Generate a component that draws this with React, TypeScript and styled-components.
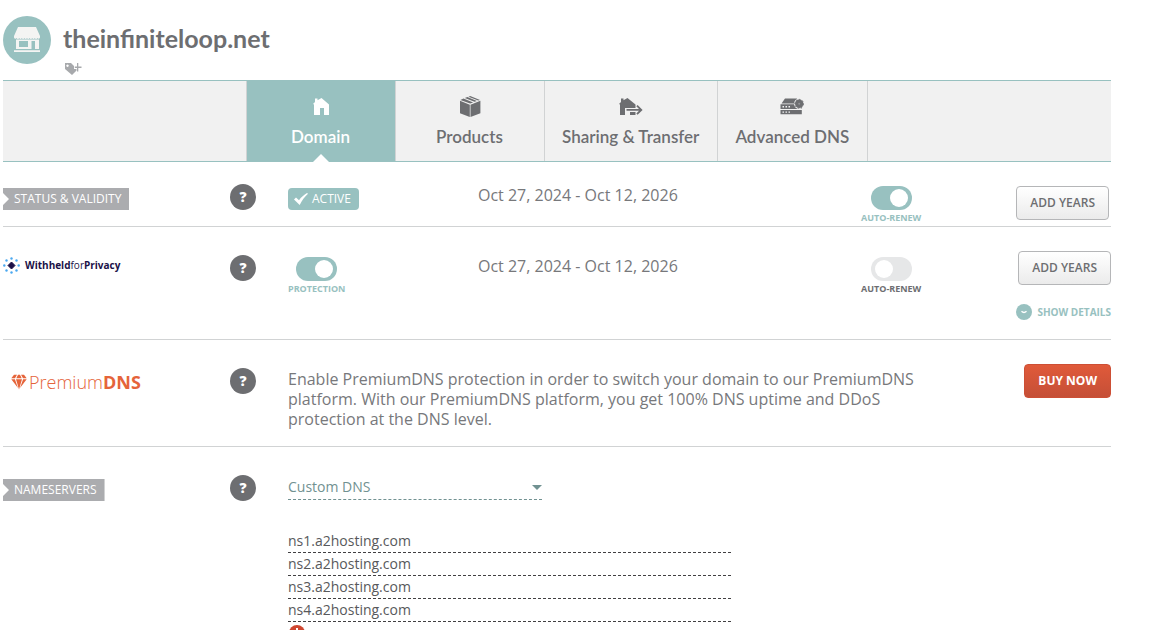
import React, { useId } from "react";
import styled, { createGlobalStyle, css } from "styled-components";

const teal = "#98c1c0";
const gray = "#6d6e71";
const line = "#d1d3d4";

const GlobalStyle = createGlobalStyle`
  *, *::before, *::after { box-sizing: border-box; }
  body {
    margin: 0;
    background: #fff;
    color: ${gray};
    font-family: "Open Sans", "Noto Sans", sans-serif;
    font-size: 16px;
    line-height: 20px;
  }
  button, input, select { font: inherit; color: inherit; }
`;

const Page = styled.main`
  padding: 16px 44px 0 3px;
`;

const Header = styled.header`
  display: flex;
  gap: 12px;
  height: 64px;
`;

const Avatar = styled.div`
  width: 48px;
  height: 48px;
  border-radius: 50%;
  background: ${teal};
  display: flex;
  align-items: center;
  justify-content: center;
`;

const Heading = styled.div`
  display: flex;
  flex-direction: column;
  align-items: flex-start;
  gap: 3px;
`;

const Title = styled.h1`
  margin: 0;
  font-family: Lato, "Open Sans", sans-serif;
  font-size: 25px;
  line-height: 44px;
  font-weight: 700;
`;

const PlainButton = styled.button`
  display: flex;
  align-items: center;
  padding: 0;
  border: 0;
  background: none;
  cursor: pointer;
`;

const TagButton = styled(PlainButton)`
  padding-left: 2px;
`;

const Tabs = styled.nav`
  display: flex;
  height: 82px;
  padding-left: 243px;
  background: #f1f1f1;
  border-top: 1px solid ${teal};
  border-bottom: 1px solid ${teal};
`;

const Tab = styled.a<{ $active?: boolean }>`
  position: relative;
  display: flex;
  flex-direction: column;
  align-items: center;
  gap: 7px;
  min-width: 149px;
  padding: 13px 18px 0 17px;
  border-left: 1px solid ${line};
  color: ${gray};
  font-family: Lato, "Open Sans", sans-serif;
  font-size: 17px;
  line-height: 24px;
  font-weight: 600;
  text-decoration: none;
  white-space: nowrap;
  &:last-child { border-right: 1px solid ${line}; }
  ${(p) =>
    p.$active &&
    css`
      background: ${teal};
      color: #fff;
      &::after {
        content: "";
        position: absolute;
        bottom: -1px;
        left: calc(50% - 8px);
        border: 8px solid transparent;
        border-top: 0;
        border-bottom-color: #fff;
      }
    `}
`;

const Row = styled.section<{ $tight?: boolean; $last?: boolean; $height: number }>`
  display: grid;
  grid-template-columns: 227px 58px 190px 1fr 60px 190px;
  align-items: start;
  min-height: ${(p) => p.$height}px;
  padding-top: ${(p) => (p.$tight ? 18 : 24)}px;
  border-bottom: ${(p) => (p.$last ? "0" : `1px solid ${line}`)};
`;

const Tag = styled.h2`
  justify-self: start;
  margin: 8px 0 0;
  padding: 0 8px 0 11px;
  background: #abacaf;
  clip-path: polygon(0 0, 100% 0, 100% 100%, 0 100%, 0 17px, 6px 11px, 0 5px);
  color: #fff;
  font-size: 12px;
  line-height: 22px;
  font-weight: 400;
`;

const Help = styled.button`
  width: 26px;
  height: 26px;
  margin-top: 4px;
  padding: 0;
  border: 0;
  border-radius: 50%;
  background: ${gray};
  color: #fff;
  font-size: 14px;
  line-height: 26px;
  font-weight: 800;
  cursor: pointer;
`;

const Status = styled.span`
  justify-self: start;
  display: flex;
  align-items: center;
  gap: 4px;
  height: 22px;
  margin-top: 8px;
  padding: 0 8px 0 6px;
  border-radius: 4px;
  background: ${teal};
  color: #fff;
  font-size: 12px;
`;

const Dates = styled.span`
  margin-top: 5px;
  color: #77787b;
`;

const SwitchLabel = styled.label<{ $muted?: boolean }>`
  justify-self: start;
  display: flex;
  flex-direction: column;
  align-items: center;
  gap: 2px;
  margin-top: 6px;
  color: ${(p) => (p.$muted ? gray : teal)};
  font-size: 9px;
  line-height: 12px;
  font-weight: 700;
  white-space: nowrap;
`;

const Switch = styled.input`
  appearance: none;
  display: flex;
  width: 41px;
  height: 24px;
  margin: 0;
  padding: 3px 4px;
  border-radius: 12px;
  background: #e6e7e8;
  &::before {
    content: "";
    width: 18px;
    height: 18px;
    border-radius: 50%;
    background: #fff;
  }
  &:checked {
    justify-content: flex-end;
    background: ${teal};
  }
`;

const Actions = styled.div<{ $inset?: boolean }>`
  display: flex;
  flex-direction: column;
  align-items: flex-end;
  gap: 18px;
  grid-column: 6;
  padding: ${(p) => (p.$inset ? "6px 2px 0 0" : "0")};
`;

const Button = styled.button<{ $primary?: boolean }>`
  height: 34px;
  padding: 0 13px;
  border: 1px solid #b5b6b8;
  border-radius: 4px;
  background: linear-gradient(#fff, #ebebeb);
  color: ${gray};
  font-size: 12px;
  font-weight: 600;
  cursor: pointer;
  ${(p) =>
    p.$primary &&
    css`
      border-color: #cd4f35;
      background: linear-gradient(#e05a3a, #c54f37);
      color: #fff;
      font-weight: 700;
    `}
`;

const DetailsButton = styled(PlainButton)`
  gap: 5px;
  color: ${teal};
  font-size: 10px;
  line-height: 18px;
  font-weight: 700;
`;

const PrivacyLogo = styled.div`
  display: flex;
  align-items: center;
  gap: 5px;
  margin-top: 4px;
  color: #1b1148;
  font-size: 10px;
  font-weight: 500;
  b { font-weight: 700; }
`;

const PremiumLogo = styled.div`
  display: flex;
  align-items: center;
  gap: 2px;
  margin-top: 8px;
  padding-left: 8px;
  color: #e5643a;
  font-size: 18px;
  font-weight: 300;
  b { font-weight: 700; }
`;

const Blurb = styled.p`
  grid-column: 3 / 6;
  max-width: 640px;
  margin: 5px 0 0;
  color: #77787b;
`;

const Servers = styled.div`
  grid-column: 3 / 5;
  display: flex;
  flex-direction: column;
  max-width: 443px;
`;

const SelectBox = styled.div`
  display: grid;
  align-items: center;
  width: 254px;
  margin-bottom: 30px;
  border-bottom: 1px dashed #719191;
  color: #719191;
  > * { grid-area: 1 / 1; }
  > svg { justify-self: end; margin-top: 5px; pointer-events: none; }
`;

const Select = styled.select`
  appearance: none;
  width: 100%;
  height: 28px;
  padding: 4px 0 0;
  border: 0;
  background: none;
  font-size: 14px;
`;

const ServerInput = styled.input`
  height: 23px;
  padding: 0 0 2px;
  border: 0;
  border-bottom: 1px dashed #414042;
  background: none;
  color: #58595b;
  font-size: 14px;
`;

const ErrorNote = styled.p`
  display: flex;
  margin: 2px 0 0;
`;

const StoreIcon = () => (
  <svg width="28" height="26" viewBox="0 0 28 26" fill="#f4f4f3" aria-hidden="true">
    <path d="M5 0h18l4 9v1.500a1.400 1.400 0 0 1-2.600.500 1.400 1.400 0 0 1-2.600 0 1.400 1.400 0 0 1-2.600 0 1.400 1.400 0 0 1-2.600 0 1.400 1.400 0 0 1-2.600 0 1.400 1.400 0 0 1-2.600 0 1.400 1.400 0 0 1-2.600 0 1.400 1.400 0 0 1-2.600 0 1.400 1.400 0 0 1-2.600 0A1.400 1.400 0 0 1 1 10.500V9z" />
    <path fillRule="evenodd" d="M3 12.500h23V22h-4v-8h-3.500v8H3zM6 14v6h9v-6z" />
    <path d="M1 23.200h26V25H1z" />
  </svg>
);

const TagPlusIcon = () => (
  <svg width="17" height="13" viewBox="0 0 17 13" fill="#a7a9ac" aria-hidden="true">
    <path fillRule="evenodd" d="M0 0h6l3 3v3h2.500v1.500L7 12 0 6zM2.500 1.500a1.200 1.200 0 1 0 .01 0z" />
    <path d="M12 0h1.300v3.600H16.500v1.300h-3.200v3.600H12V4.900H9.800V3.600H12z" />
  </svg>
);

const HouseIcon = () => (
  <svg width="24" height="24" viewBox="0 0 24 24" fill="currentColor" aria-hidden="true">
    <path d="M6 4.500h2.500v1.700L12.500 4 20 10.500V21h-5v-7h-4v7H5V10.500l-1-.5 2-2z" />
  </svg>
);

const BoxIcon = () => (
  <svg width="24" height="24" viewBox="0 0 24 24" fill="currentColor" aria-hidden="true">
    <path d="M2 6.800l9.800 3.900V23L2 19.300zM22.400 6.800l-9.900 3.900V23l9.900-3.700z" />
    <path d="M2.400 5.900L5.500 4.600l9.700 3.800-3 1.200zM6.800 4.100l2.600-1L18.900 6.900l-2.400.9zM10.500 2.700L12.200 2l9.800 3.900-1.800.7z" />
  </svg>
);

const TransferIcon = () => (
  <svg width="24" height="24" viewBox="0 0 24 24" fill="currentColor" aria-hidden="true">
    <path d="M2 4.500h2.500v1.700L8.500 4l8 6.500V14H6v7H1V10.500L0 10l2-2z" />
    <path d="M7.500 15H20l-2.700-2.700 1.300-1.300 5 4.900-5 4.900-1.300-1.300L20 16.800H7.500z" />
    <path d="M11 18h5.500v3H11z" />
  </svg>
);

const ServerIcon = () => (
  <svg width="24" height="24" viewBox="0 0 24 24" fill="currentColor" aria-hidden="true">
    <path d="M5 4.500h12L15.500 9.500H1.500z" />
    <path fillRule="evenodd" d="M.5 10.300h21.300V15H.5zm2 1.700v1.400H4V12zm3 0v1.400H7V12zm3 0v1.400H10V12z" />
    <path fillRule="evenodd" d="M.5 16h21.300v4.200H.5zm2 1.400v1.400H4v-1.400zm3 0v1.400H7v-1.400zm3 0v1.400H10v-1.400z" />
    <circle cx="19.200" cy="9.800" r="5.200" fill="#f1f1f1" />
    <circle cx="19.200" cy="9.800" r="4.200" />
    <circle cx="19.200" cy="9.800" r="4.400" fill="none" stroke="currentColor" strokeWidth="1" strokeDasharray="1.600 1.700" />
    <circle cx="19.200" cy="9.800" r="1" fill="#939497" />
  </svg>
);

const CheckIcon = () => (
  <svg width="14" height="12" viewBox="0 0 14 12" fill="#fff" aria-hidden="true">
    <path d="M0 6.500L2 4.500l3 2.800C7 4.200 10 1.800 13 0l1 .8C10.500 4 8 7.500 5.700 12z" />
  </svg>
);

const PrivacyIcon = () => (
  <svg width="17" height="17" viewBox="0 0 17 17" fill="#4aa8f0" aria-hidden="true">
    <path d="M8.500 5l3.500 3.500L8.500 12 5 8.500z" fill="#1b1148" stroke="#1b1148" strokeWidth="1" strokeLinejoin="round" />
    <circle cx="8.500" cy="1.500" r="1.200" />
    <circle cx="8.500" cy="15.500" r="1.200" />
    <circle cx="1.300" cy="8.500" r="1.200" />
    <circle cx="15.700" cy="8.500" r="1.200" />
    <circle cx="3.500" cy="3.500" r="1.200" />
    <circle cx="13.500" cy="3.500" r="1.200" />
    <circle cx="3.500" cy="13.500" r="1.200" />
    <circle cx="13.500" cy="13.500" r="1.200" />
  </svg>
);

const DiamondIcon = () => (
  <svg width="16" height="16" viewBox="0 0 16 16" fill="currentColor" aria-hidden="true">
    <path d="M3 .8h3L4 4.300H.3zM7 .8h2l1.700 3.500H5.300zM10 .8h3l2.700 3.500H12zM.3 5.300h3.600L7 14zM5 5.300h6L8 15.500zM12.100 5.300h3.600L9 14z" />
  </svg>
);

const DetailsIcon = () => (
  <svg width="16" height="16" viewBox="0 0 16 16" aria-hidden="true">
    <circle cx="8" cy="8" r="8" fill={teal} />
    <path d="M5.500 7.300Q8 9.800 10.500 7.300" fill="none" stroke="#fff" strokeWidth="1.400" />
  </svg>
);

const CaretIcon = () => (
  <svg width="10" height="5" viewBox="0 0 10 5" fill="currentColor" aria-hidden="true">
    <path d="M0 0h10L5 5z" />
  </svg>
);

const ErrorIcon = () => (
  <svg width="18" height="18" viewBox="0 0 18 18" role="img" aria-label="Error">
    <circle cx="9" cy="9" r="8" fill="#cf4630" />
    <path d="M9 4v6M9 12v2" stroke="#fff" strokeWidth="2" />
  </svg>
);

function Toggle({ text, on, muted }: { text: string; on?: boolean; muted?: boolean }) {
  const id = useId();
  return (
    <SwitchLabel htmlFor={id} $muted={muted}>
      <Switch id={id} type="checkbox" role="switch" defaultChecked={on} />
      {text}
    </SwitchLabel>
  );
}

const HelpButton = ({ topic }: { topic: string }) => (
  <Help type="button" aria-label={`Help: ${topic}`}>?</Help>
);

const tabs = [
  { label: "Domain", Icon: HouseIcon },
  { label: "Products", Icon: BoxIcon },
  { label: "Sharing & Transfer", Icon: TransferIcon },
  { label: "Advanced DNS", Icon: ServerIcon },
];

const servers = [1, 2, 3, 4].map((n) => `ns${n}.a2hosting.com`);

export default function App() {
  return (
    <>
      <GlobalStyle />
      <Page>
        <Header>
          <Avatar><StoreIcon /></Avatar>
          <Heading>
            <Title>theinfiniteloop.net</Title>
            <TagButton type="button" aria-label="Add tag"><TagPlusIcon /></TagButton>
          </Heading>
        </Header>
        <Tabs>
          {tabs.map(({ label, Icon }, i) => (
            <Tab key={label} href="#" $active={i === 0}>
              <Icon />
              {label}
            </Tab>
          ))}
        </Tabs>

        <Row $tight $height={65}>
          <Tag>STATUS &amp; VALIDITY</Tag>
          <HelpButton topic="status" />
          <Status><CheckIcon />ACTIVE</Status>
          <Dates>Oct 27, 2024 - Oct 12, 2026</Dates>
          <Toggle text="AUTO-RENEW" on />
          <Actions $inset>
            <Button type="button">ADD YEARS</Button>
          </Actions>
        </Row>

        <Row $height={113}>
          <PrivacyLogo>
            <PrivacyIcon />
            <span><b>Withheld</b>for<b>Privacy</b></span>
          </PrivacyLogo>
          <HelpButton topic="privacy" />
          <Toggle text="PROTECTION" on />
          <Dates>Oct 27, 2024 - Oct 12, 2026</Dates>
          <Toggle text="AUTO-RENEW" muted />
          <Actions>
            <Button type="button">ADD YEARS</Button>
            <DetailsButton type="button"><DetailsIcon />SHOW DETAILS</DetailsButton>
          </Actions>
        </Row>

        <Row $height={107}>
          <PremiumLogo>
            <DiamondIcon />
            <span>Premium<b>DNS</b></span>
          </PremiumLogo>
          <HelpButton topic="PremiumDNS" />
          <Blurb>
            Enable PremiumDNS protection in order to switch your domain to our PremiumDNS
            platform. With our PremiumDNS platform, you get 100% DNS uptime and DDoS
            protection at the DNS level.
          </Blurb>
          <Actions>
            <Button type="button" $primary>BUY NOW</Button>
          </Actions>
        </Row>

        <Row $last $height={180}>
          <Tag>NAMESERVERS</Tag>
          <HelpButton topic="nameservers" />
          <Servers>
            <SelectBox>
              <Select aria-label="Nameserver type" defaultValue="Custom DNS">
                <option>Custom DNS</option>
              </Select>
              <CaretIcon />
            </SelectBox>
            {servers.map((s, i) => (
              <ServerInput key={s} aria-label={`Nameserver ${i + 1}`} defaultValue={s} />
            ))}
            <ErrorNote><ErrorIcon /></ErrorNote>
          </Servers>
        </Row>
      </Page>
    </>
  );
}
